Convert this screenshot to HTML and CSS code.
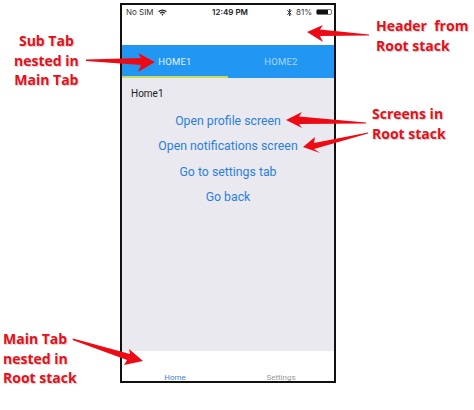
FILE: index.html
```html
<!DOCTYPE html>
<html>
<head>
<meta charset="utf-8">
<title>Nested navigators</title>
<link rel="stylesheet" href="styles.css">
</head>
<body>

<div class="phone">
	<div class="statusbar">
		<div class="status-left">
			No SIM
			<svg class="wifi" width="9" height="7" viewBox="0 0 11 8">
				<path d="M0.3 2.6 A7.4 7.4 0 0 1 10.7 2.6 L9.6 3.7 A5.8 5.8 0 0 0 1.4 3.7 Z" fill="#222"/>
				<path d="M2.2 4.5 A4.7 4.7 0 0 1 8.8 4.5 L7.7 5.6 A3.1 3.1 0 0 0 3.3 5.6 Z" fill="#222"/>
				<path d="M4.1 6.4 A2 2 0 0 1 6.9 6.4 L5.5 7.9 Z" fill="#222"/>
			</svg>
		</div>
		<div class="status-time">12:49 PM</div>
		<div class="status-right">
			<svg class="bt" width="5" height="9" viewBox="0 0 5 9">
				<path d="M0.3 2.3 L4.2 6.2 L2.4 8 V1 L4.2 2.8 L0.3 6.7" fill="none" stroke="#222" stroke-width="0.9"/>
			</svg>
			81%
			<div class="battery"><div class="battery-level"></div></div>
		</div>
	</div>
	<div class="header"></div>

	<div class="subtabs">
		<div class="subtab active">HOME1</div>
		<div class="subtab">HOME2</div>
	</div>

	<div class="content">
		<p class="title">Home1</p>
		<a class="link">Open profile screen</a>
		<a class="link">Open notifications screen</a>
		<a class="link">Go to settings tab</a>
		<a class="link">Go back</a>
	</div>

	<div class="maintabs">
		<div class="maintab active">Home</div>
		<div class="maintab">Settings</div>
	</div>
</div>

<!-- annotations drawn over the screenshot -->
<div class="note note-sub">Sub Tab<br>nested in<br>Main Tab</div>
<div class="note note-header">Header&nbsp; from<br>Root stack</div>
<div class="note note-screens">Screens in<br>Root stack</div>
<div class="note note-main">Main Tab<br>nested in<br>Root stack</div>

<svg class="arrows" width="474" height="410" viewBox="0 0 474 410">
	<path d="M369 34.5 L369 35.6 L320 36 L323 42 L307 32 L323 25 L320 29.5 Z"/>
	<path d="M86 59.6 L86 61 L141 65 L138 72 L155 62 L138 53 L141 58 Z"/>
	<path d="M366 122.4 L366 123.6 L299 124 L302 128 L286 120 L302 112 L299 116.5 Z"/>
	<path d="M368 132.4 L368 133.6 L314 149 L320 153 L303 147 L315 137 L314 143 Z"/>
	<path d="M73 338.4 L72.5 340 L127 360 L124 365 L143 361 L129 349 L130 354 Z"/>
</svg>

</body>
</html>
```

FILE: styles.css
```css
html, body {
	margin: 0;
	padding: 0;
}
body {
	width: 474px;
	height: 410px;
	background-color: #fff;
	position: relative;
	overflow: hidden;
	font-family: Roboto, "Liberation Sans", sans-serif;
}

.phone {
	box-sizing: border-box;
	width: 216px;
	height: 380px;
	margin: 0 0 0 120px;
	position: relative;
	top: 3px;
	border: 2px solid #111;
	display: flex;
	flex-direction: column;
	background-color: #fff;
}

.statusbar {
	height: 14px;
	display: flex;
	align-items: center;
	justify-content: space-between;
	padding: 0 2px 0 4px;
	font-family: Inter, "Liberation Sans", sans-serif;
	font-size: 8px;
	color: #333;
	position: relative;
}
.status-left, .status-right {
	display: flex;
	align-items: center;
	gap: 4px;
}
.status-time {
	position: absolute;
	left: 4px;
	right: 0;
	text-align: center;
	font-weight: 600;
	color: #222;
}
.battery {
	width: 16px;
	height: 6px;
	border: 1px solid #777;
	border-radius: 2px;
	box-sizing: border-box;
}
.battery-level {
	width: 80%;
	height: 100%;
	background-color: #111;
}

.header {
	height: 26px;
}

.subtabs {
	height: 33px;
	flex: none;
	display: flex;
	background-color: #2196f3;
}
.subtab {
	flex: 1;
	display: flex;
	align-items: center;
	justify-content: center;
	font-size: 9.5px;
	color: #a9d6f9;
	letter-spacing: 0.2px;
}
.subtab.active {
	color: #e3f2fd;
	box-shadow: inset 0 -2px 0 #c6dd5a;
}

.content {
	flex: 1;
	background-color: #e9e9ef;
	display: flex;
	flex-direction: column;
	align-items: center;
}
.title {
	align-self: flex-start;
	margin: 9px 0 0 9px;
	font-size: 10px;
	line-height: 13px;
	color: #222;
}
.link {
	font-size: 12.3px;
	line-height: 25.4px;
	color: #2b7fdc;
}
.title + .link {
	margin-top: 9px;
}

.maintabs {
	height: 30px;
	flex: none;
	display: flex;
	align-items: flex-end;
}
.maintab {
	flex: 1;
	text-align: center;
	font-size: 8px;
	line-height: 7px;
	color: #999;
}
.maintab.active {
	color: #3f7fdc;
}

.note {
	position: absolute;
	font-family: "Open Sans", "Noto Sans", sans-serif;
	font-weight: 700;
	font-size: 14px;
	line-height: 19.5px;
	color: #e6101c;
	text-shadow: 1px 1px 1px #ccc;
	white-space: nowrap;
}
.note-sub {
	left: 14px;
	top: 31px;
	text-align: center;
}
.note-header {
	left: 376px;
	top: 16px;
}
.note-screens {
	left: 372px;
	top: 104px;
}
.note-main {
	left: 3px;
	top: 329px;
}

.arrows {
	position: absolute;
	left: 0;
	top: 0;
	fill: #ee0a14;
}
```
